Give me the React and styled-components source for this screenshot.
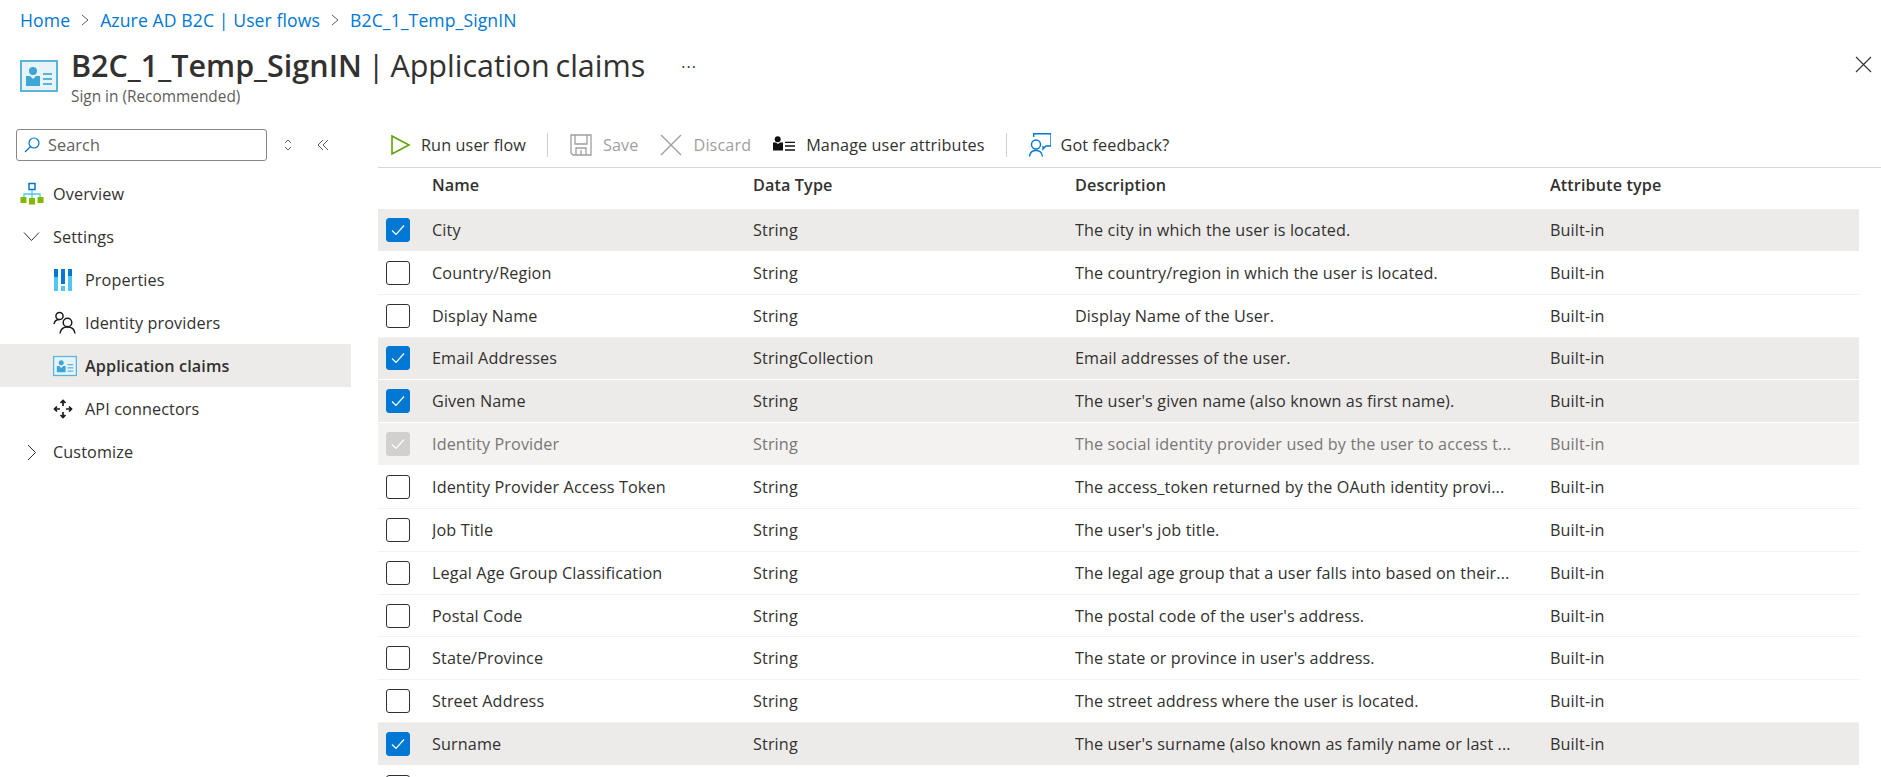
import React from "react";
import styled, { createGlobalStyle } from "styled-components";

const GlobalStyle = createGlobalStyle`
  html, body {
    margin: 0;
    padding: 0;
    height: 100%;
    overflow: hidden;
    background: #fff;
  }
  body {
    font-family: "Open Sans", "Noto Sans", sans-serif;
    font-size: 16.2px;
    letter-spacing: 0.12px;
    color: #323130;
  }
`;

const Page = styled.div`
  width: 1881px;
  height: 777px;
  overflow: hidden;
  display: flex;
  flex-direction: column;
`;

const Breadcrumbs = styled.nav`
  height: 39px;
  padding-left: 20px;
  display: flex;
  align-items: center;
  gap: 9px;
  font-size: 17.6px;
  letter-spacing: 0.1px;
`;

const Crumb = styled.a`
  color: #0078d4;
`;

const CrumbSep = styled.svg`
  width: 12px;
  height: 14px;
  fill: none;
  stroke: #605e5c;
  stroke-width: 1;
`;

const Header = styled.header`
  height: 75px;
  padding: 7px 9px 0 20px;
  box-sizing: border-box;
  display: flex;
  align-items: flex-start;
`;

const TitleIcon = styled.svg`
  width: 38px;
  height: 32px;
  margin-top: 14px;
  margin-right: 13px;
  flex: none;
`;

const TitleBlock = styled.div`
  display: flex;
  flex-direction: column;
`;

const Title = styled.h1`
  margin: 0;
  font-size: 30.5px;
  line-height: 38px;
  font-weight: 400;
  letter-spacing: 0;
  word-spacing: -2px;
  white-space: nowrap;
  b {
    font-weight: 600;
  }
`;

const Subtitle = styled.div`
  font-size: 15.4px;
  line-height: 18px;
  margin-top: 4px;
  color: #605e5c;
  letter-spacing: 0;
`;

const More = styled.div`
  margin: 11px 0 0 36px;
  font-size: 16px;
  line-height: 20px;
  letter-spacing: 1px;
`;

const CloseButton = styled.svg`
  margin: 10px 0 0 auto;
  width: 17px;
  height: 17px;
  stroke: #323130;
  stroke-width: 1.1;
  fill: none;
`;

const Body = styled.div`
  flex: 1;
  display: flex;
  min-height: 0;
`;

const Sidebar = styled.aside`
  width: 351px;
  flex: none;
`;

const SearchRow = styled.div`
  height: 32px;
  margin: 15px 0 11px;
  padding-left: 16px;
  display: flex;
  align-items: center;
`;

const SearchBox = styled.div`
  width: 251px;
  height: 32px;
  box-sizing: border-box;
  border: 1px solid #8a8886;
  border-radius: 3px;
  padding-left: 6px;
  display: flex;
  align-items: center;
  gap: 7px;
  color: #605e5c;
`;

const SearchControl = styled.svg`
  margin-left: ${(p) => p.$gap}px;
  width: 12px;
  height: 14px;
  fill: none;
  stroke: #605e5c;
  stroke-width: 1;
`;

const NavItem = styled.div`
  height: 43.1px;
  padding-left: ${(p) => p.$indent}px;
  display: flex;
  align-items: center;
  background: ${(p) => (p.$active ? "#edebe9" : "transparent")};
  font-weight: ${(p) => (p.$active ? 600 : 400)};
`;

const NavIcon = styled.svg`
  width: 24px;
  height: 24px;
  margin-right: ${(p) => p.$gap}px;
  flex: none;
`;

const Chevron = styled.svg`
  width: 17px;
  height: 17px;
  margin-right: 13px;
  margin-left: 4px;
  fill: none;
  stroke: #323130;
  stroke-width: 1;
  flex: none;
`;

const Main = styled.main`
  flex: 1;
  min-width: 0;
  padding-left: 27px;
`;

const Toolbar = styled.div`
  height: 54px;
  box-sizing: border-box;
  padding: 8px 0 0 12px;
  border-bottom: 1px solid #d9d7d5;
  display: flex;
  align-items: center;
`;

const ToolButton = styled.div`
  display: flex;
  align-items: center;
  gap: ${(p) => p.$gap}px;
  margin-right: ${(p) => p.$after}px;
  color: ${(p) => (p.$disabled ? "#a19f9d" : "#323130")};
  white-space: nowrap;
`;

const ToolIcon = styled.svg`
  width: 22px;
  height: 24px;
  flex: none;
`;

const ToolDivider = styled.div`
  width: 1px;
  height: 24px;
  background: #d2d0ce;
  margin-right: 22px;
`;

const Table = styled.div`
  margin-right: 22px;
`;

const Row = styled.div`
  display: grid;
  grid-template-columns: 54px 321px 322px 475px 1fr;
  align-items: center;
  height: ${(p) => (p.$head ? 41 : 42.85)}px;
  box-sizing: border-box;
  padding-bottom: ${(p) => (p.$head ? 8 : 0)}px;
  border-bottom: ${(p) => (p.$head ? "0" : "1px solid #f3f2f1")};
  background: ${(p) => (p.$disabled ? "#f3f2f1" : p.$selected ? "#edebe9" : "#fff")};
  color: ${(p) => (p.$disabled ? "#797775" : "#323130")};
  font-weight: ${(p) => (p.$head ? 600 : 400)};
  ${(p) => (p.$selected || p.$disabled ? "border-bottom-color: #fff;" : "")}
`;

const Cell = styled.div`
  overflow: hidden;
  white-space: nowrap;
  text-overflow: ellipsis;
  padding-right: 24px;
`;

const Check = styled.div`
  width: 24px;
  height: 24px;
  box-sizing: border-box;
  margin-left: 8px;
  border-radius: 3px;
  border: 1px solid ${(p) => (p.$state === "on" ? "#0078d4" : p.$state === "off" ? "#323130" : "#d2d0ce")};
  background: ${(p) => (p.$state === "on" ? "#0078d4" : p.$state === "off" ? "#fff" : "#d2d0ce")};
  display: flex;
  align-items: center;
  justify-content: center;
  svg {
    width: 16px;
    height: 16px;
    stroke: #fff;
    stroke-width: 1.2;
    fill: none;
  }
`;

const claims = [
  ["City", "String", "The city in which the user is located.", "on"],
  ["Country/Region", "String", "The country/region in which the user is located.", "off"],
  ["Display Name", "String", "Display Name of the User.", "off"],
  ["Email Addresses", "StringCollection", "Email addresses of the user.", "on"],
  ["Given Name", "String", "The user's given name (also known as first name).", "on"],
  ["Identity Provider", "String", "The social identity provider used by the user to access t...", "locked"],
  ["Identity Provider Access Token", "String", "The access_token returned by the OAuth identity provi...", "off"],
  ["Job Title", "String", "The user's job title.", "off"],
  ["Legal Age Group Classification", "String", "The legal age group that a user falls into based on their...", "off"],
  ["Postal Code", "String", "The postal code of the user's address.", "off"],
  ["State/Province", "String", "The state or province in user's address.", "off"],
  ["Street Address", "String", "The street address where the user is located.", "off"],
  ["Surname", "String", "The user's surname (also known as family name or last ...", "on"],
  ["", "", "", "off"],
];

const IdCard = () => (
  <>
    <rect x="1" y="1" width="36" height="30" fill="#e6f4fa" stroke="#59b4d9" strokeWidth="2" />
    <circle cx="13" cy="11" r="4" fill="#3ea6d6" />
    <path d="M6 16h4l3 3 3-3h4v10H6z" fill="#3ea6d6" />
    <path d="M23 14h9M23 19h9M23 24h9" stroke="#59b4d9" strokeWidth="2" />
  </>
);

const App = () => (
  <Page>
    <GlobalStyle />
    <Breadcrumbs>
      <Crumb>Home</Crumb>
      <CrumbSep viewBox="0 0 12 14"><path d="M3 2l6 5-6 5" /></CrumbSep>
      <Crumb>Azure AD B2C | User flows</Crumb>
      <CrumbSep viewBox="0 0 12 14"><path d="M3 2l6 5-6 5" /></CrumbSep>
      <Crumb>B2C_1_Temp_SignIN</Crumb>
    </Breadcrumbs>
    <Header>
      <TitleIcon viewBox="0 0 38 32"><IdCard /></TitleIcon>
      <TitleBlock>
        <Title><b>B2C_1_Temp_SignIN</b> | Application claims</Title>
        <Subtitle>Sign in (Recommended)</Subtitle>
      </TitleBlock>
      <More>···</More>
      <CloseButton viewBox="0 0 17 17"><path d="M1 1l15 15M16 1L1 16" /></CloseButton>
    </Header>
    <Body>
      <Sidebar>
        <SearchRow>
          <SearchBox>
            <svg width="18" height="18" viewBox="0 0 18 18" fill="none" stroke="#0078d4" strokeWidth="1.2">
              <circle cx="11" cy="7" r="5" />
              <path d="M7.5 10.5L2 16" />
            </svg>
            Search
          </SearchBox>
          <SearchControl $gap={15} viewBox="0 0 12 14"><path d="M3 5l3-3 3 3M3 9l3 3 3-3" /></SearchControl>
          <SearchControl $gap={23} viewBox="0 0 12 14"><path d="M6 2L1 7l5 5M11 2L6 7l5 5" /></SearchControl>
        </SearchRow>
        <NavItem $indent={20}>
          <NavIcon $gap={9} viewBox="0 0 24 24">
            <rect x="9" y="1.5" width="6" height="6" fill="#fff" stroke="#0078d4" strokeWidth="1.5" />
            <path d="M12 8v8M4 15v-3h16v3" fill="none" stroke="#50c7f0" strokeWidth="1.3" />
            <rect x="0.5" y="15" width="6" height="6" fill="#7fba00" />
            <rect x="9" y="16" width="6" height="6.5" fill="#7fba00" />
            <rect x="17.5" y="15" width="6" height="6" fill="#7fba00" />
          </NavIcon>
          Overview
        </NavItem>
        <NavItem $indent={19}>
          <Chevron viewBox="0 0 17 17"><path d="M1 4.500l7.500 8 7.500-8" /></Chevron>
          Settings
        </NavItem>
        <NavItem $indent={53}>
          <NavIcon $gap={8} viewBox="0 0 24 24">
            <path d="M1 1h4v8H1zM8 1h4v15H8zM15 1h4v7h-4z" fill="#0078d4" />
            <path d="M1 9h4v14H1zM8 18h4v5H8zM15 8h4v15h-4z" fill="#50c7f0" />
          </NavIcon>
          Properties
        </NavItem>
        <NavItem $indent={53}>
          <NavIcon $gap={8} viewBox="0 0 24 24" fill="none" stroke="#1b1a19" strokeWidth="1.5">
            <circle cx="6.500" cy="5" r="3.600" />
            <path d="M1 13c.5-3 2.500-4.500 5.500-4.500" />
            <circle cx="14.500" cy="11.500" r="4.300" />
            <path d="M7 22.500c.5-4 3.500-6.500 7.500-6.500s7 2.500 7.500 6.500" />
          </NavIcon>
          Identity providers
        </NavItem>
        <NavItem $indent={53} $active>
          <NavIcon $gap={8} viewBox="0 0 38 32"><IdCard /></NavIcon>
          Application claims
        </NavItem>
        <NavItem $indent={53}>
          <NavIcon $gap={8} viewBox="0 0 24 24" fill="none" stroke="#1b1a19" strokeWidth="1.700">
            <path d="M10 9V4M7.500 6L10 3.500 12.500 6M10 15v5M7.500 18l2.500 2.500 2.500-2.500M7 12H2M4 9.500L1.500 12 4 14.500M13 12h5M16 9.500l2.500 2.500-2.500 2.500" />
          </NavIcon>
          API connectors
        </NavItem>
        <NavItem $indent={19}>
          <Chevron viewBox="0 0 17 17"><path d="M5 1l7.500 7.500L5 16" /></Chevron>
          Customize
        </NavItem>
      </Sidebar>
      <Main>
        <Toolbar>
          <ToolButton $gap={9} $after={21}>
            <ToolIcon viewBox="0 0 22 24"><path d="M2 3l17 9-17 9z" fill="none" stroke="#5ea500" strokeWidth="1.600" /></ToolIcon>
            Run user flow
          </ToolButton>
          <ToolDivider />
          <ToolButton $disabled $gap={11} $after={21}>
            <ToolIcon viewBox="0 0 22 24" fill="none" stroke="#a19f9d" strokeWidth="1.300">
              <path d="M1 2h20v20H3l-2-2z" />
              <path d="M5 2v9h12V2M6 22v-7h10v7M11 17v5" />
            </ToolIcon>
            Save
          </ToolButton>
          <ToolButton $disabled $gap={12} $after={22}>
            <ToolIcon viewBox="0 0 22 24" fill="none" stroke="#a19f9d" strokeWidth="1.400">
              <path d="M1 2l20 20M21 2L1 22" />
            </ToolIcon>
            Discard
          </ToolButton>
          <ToolButton $gap={11} $after={21}>
            <ToolIcon viewBox="0 0 22 24">
              <circle cx="4.700" cy="6.300" r="3" fill="#111" />
              <path d="M0 9.500h3L5 11l2-1.500h3V17.500H0z" fill="#111" />
              <path d="M12 9.300h10M12 13h10M12 17h10" stroke="#111" strokeWidth="1.300" />
            </ToolIcon>
            Manage user attributes
          </ToolButton>
          <ToolDivider />
          <ToolButton $gap={10} $after={0}>
            <ToolIcon viewBox="0 0 22 24" fill="none" stroke="#0078d4" strokeWidth="1.400">
              <path d="M4.700 4V.7H22V13h-5l-3 3v-3" />
              <circle cx="7" cy="11.500" r="4.500" />
              <path d="M.5 23.500c.5-4 3-6 6.500-6s6 2 6.500 6" />
            </ToolIcon>
            Got feedback?
          </ToolButton>
        </Toolbar>
        <Table>
          <Row $head>
            <div />
            <Cell>Name</Cell>
            <Cell>Data Type</Cell>
            <Cell>Description</Cell>
            <Cell>Attribute type</Cell>
          </Row>
          {claims.map(([name, type, description, state], index) => (
            <Row key={index} $selected={state === "on"} $disabled={state === "locked"}>
              <Check $state={state}>
                {state !== "off" && (
                  <svg viewBox="0 0 16 16"><path d="M2 8.500l4 4 8-9" /></svg>
                )}
              </Check>
              <Cell>{name}</Cell>
              <Cell>{type}</Cell>
              <Cell>{description}</Cell>
              <Cell>{name && "Built-in"}</Cell>
            </Row>
          ))}
        </Table>
      </Main>
    </Body>
  </Page>
);

export default App;
